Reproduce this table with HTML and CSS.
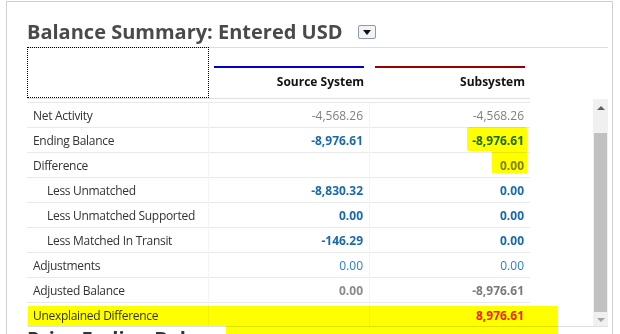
FILE: index.html
```html
<!DOCTYPE html>
<html>
<head>
<meta charset="utf-8">
<link rel="stylesheet" href="styles.css">
</head>
<body>
<div class="panel">
  <div class="title-row">
    <h2 class="title">Balance Summary: Entered USD</h2>
    <button class="dd" type="button"><span class="tri"></span></button>
  </div>
  <div class="thead">
    <div class="corner"></div>
    <div class="colh">
      <div class="bar blue-bar"></div>
      <div class="hlabel">Source System</div>
    </div>
    <div class="colh colh-sub">
      <div class="bar red-bar"></div>
      <div class="hlabel">Subsystem</div>
    </div>
  </div>
  <div class="tbody-wrap">
    <div class="rows">
      <div class="row"><div class="lab">Net Activity</div><div class="val gray">-4,568.26</div><div class="val gray">-4,568.26</div></div>
      <div class="row"><div class="lab">Ending Balance</div><div class="val blue b">-8,976.61</div><div class="val blue b">-8,976.61</div></div>
      <div class="row"><div class="lab">Difference</div><div class="val"></div><div class="val gray b">0.00</div></div>
      <div class="row"><div class="lab ind">Less Unmatched</div><div class="val blue b">-8,830.32</div><div class="val blue b">0.00</div></div>
      <div class="row"><div class="lab ind">Less Unmatched Supported</div><div class="val blue b">0.00</div><div class="val blue b">0.00</div></div>
      <div class="row"><div class="lab ind">Less Matched In Transit</div><div class="val blue b">-146.29</div><div class="val blue b">0.00</div></div>
      <div class="row"><div class="lab">Adjustments</div><div class="val lblue">0.00</div><div class="val lblue">0.00</div></div>
      <div class="row"><div class="lab">Adjusted Balance</div><div class="val gray2 b">0.00</div><div class="val gray3 b">-8,976.61</div></div>
      <div class="row"><div class="lab">Unexplained Difference</div><div class="val"></div><div class="val red b">8,976.61</div></div>
    </div>
    <div class="scrollbar">
      <div class="sb-up"><span class="arr-up"></span></div>
      <div class="sb-gap"></div>
      <div class="sb-thumb"></div>
      <div class="sb-down"><span class="arr-down"></span></div>
    </div>
  </div>
  <h2 class="title next">Prior Ending Balance</h2>
</div>
<div class="hl hl-end"></div>
<div class="hl hl-diff"></div>
<div class="hl hl-unexp"></div>
<div class="hl hl-unexp2"></div>
</body>
</html>
```
FILE: styles.css
```css
html, body {
  margin: 0;
  padding: 0;
  background: #fff;
  overflow: hidden;
  height: 334px;
}
body {
  font-family: "Open Sans", "Liberation Sans", sans-serif;
  font-size: 12px;
  color: #333;
  position: relative;
}
.panel {
  margin: 1px 0 0 6px;
  width: 581px;
  padding: 0 4px 0 20px;
  border: 1px solid #cfcfcf;
  border-bottom: none;
  height: 340px;
}
.title-row {
  display: flex;
  align-items: center;
  padding: 18px 0 3px 0;
  border-bottom: 1px solid #d9dee5;
}
.title {
  margin: 0;
  font-size: 20px;
  line-height: 24px;
  font-weight: 700;
  color: #4a4a4a;
}
.dd {
  margin: 0 0 0 15px;
  padding: 0;
  width: 18px;
  height: 14px;
  border: 1px solid #8d9aa7;
  border-radius: 2px;
  background: #f1f3f6;
  display: flex;
  align-items: center;
  justify-content: center;
}
.tri {
  width: 0;
  height: 0;
  border-left: 4px solid transparent;
  border-right: 4px solid transparent;
  border-top: 5px solid #111;
  margin-top: 1px;
}
.thead {
  display: flex;
  height: 50px;
  width: 503px;
  border-bottom: 1px solid #dde1e6;
}
.corner {
  width: 180px;
  height: 49px;
  border: 1px dotted #000;
  margin-top: -1px;
  flex: none;
}
.colh {
  width: 161px;
  flex: none;
  display: flex;
  flex-direction: column;
  align-items: stretch;
  padding-top: 18px;
  box-sizing: border-box;
}
.bar {
  height: 2px;
  margin: 0 6px 0 5px;
}
.blue-bar { background: #0000c8; }
.red-bar { background: #9b0000; }
.hlabel {
  margin-top: 6px;
  line-height: 16px;
  text-align: right;
  padding-right: 6px;
  font-weight: 700;
  color: #111;
}
.tbody-wrap {
  display: flex;
  height: 227px;
  border-bottom: 1px solid #dde1e6;
  overflow: hidden;
}
.rows {
  width: 503px;
  padding-top: 3px;
  flex: none;
}
.row {
  display: grid;
  grid-template-columns: 181px 161px 161px;
  height: 24px;
  border-top: 1px solid #e9e9e9;
}
.lab {
  padding-left: 6px;
  line-height: 24px;
  padding-top: 1px;
  color: #333;
  white-space: nowrap;
  letter-spacing: -0.3px;
}
.lab.ind { padding-left: 20px; }
.val {
  border-left: 1px solid #f3f3f3;
  text-align: right;
  padding-right: 6px;
  line-height: 24px;
  padding-top: 1px;
}
.b { font-weight: 700; }
.gray { color: #7f7f7f; }
.gray2 { color: #8a8a8a; }
.gray3 { color: #7a7a7a; }
.blue { color: #1a6aab; }
.lblue { color: #2d7fc3; }
.red { color: #f0200f; }
.scrollbar {
  margin-left: auto;
  width: 15px;
  background: #f0f0f0;
  display: flex;
  flex-direction: column;
}
.sb-up {
  height: 17px;
  display: flex;
  align-items: center;
  justify-content: center;
  flex: none;
}
.arr-up {
  width: 0;
  height: 0;
  border-left: 4px solid transparent;
  border-right: 4px solid transparent;
  border-bottom: 4px solid #606060;
}
.sb-gap { height: 17px; flex: none; }
.sb-thumb {
  height: 179px;
  margin: 0 1px;
  background: #c1c1c1;
  flex: none;
}
.sb-down {
  height: 14px;
  display: flex;
  align-items: center;
  justify-content: center;
  flex: none;
}
.arr-down {
  width: 0;
  height: 0;
  border-left: 4px solid transparent;
  border-right: 4px solid transparent;
  border-top: 4px solid #a3a3a3;
  margin-top: 2px;
}
.next {
  line-height: 18px;
  margin-top: 3px;
  color: #333;
}
.hl {
  position: absolute;
  background: #ffff00;
  mix-blend-mode: multiply;
}
.hl-end { left: 467px; top: 127px; width: 60px; height: 24px; border-radius: 2px; }
.hl-diff { left: 492px; top: 149px; width: 35px; height: 24px; }
.hl-unexp { left: 28px; top: 306px; width: 530px; height: 20px; }
.hl-unexp2 { left: 226px; top: 326px; width: 332px; height: 8px; }
```
